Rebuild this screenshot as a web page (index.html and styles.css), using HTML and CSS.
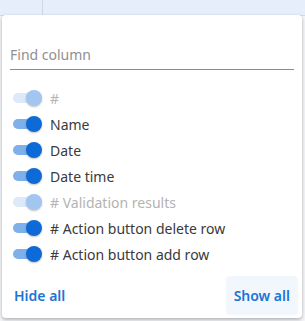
FILE: index.html
```html
<!DOCTYPE html>
<html lang="en">
<head>
    <meta charset="UTF-8">
    <meta name="viewport" content="width=device-width, initial-scale=1.0">
    <title>Columns panel</title>
    <link rel="stylesheet" href="styles.css">
</head>
<body>
    <div class="grid-header">
        <div class="header-cell first"></div>
        <div class="header-cell"></div>
    </div>

    <div class="panel">
        <div class="search">
            <input type="text" class="search-input" placeholder="Find column">
        </div>

        <ul class="column-list">
            <li class="column-item disabled"><span class="switch on"><span class="track"></span><span class="thumb"></span></span>#</li>
            <li class="column-item"><span class="switch on"><span class="track"></span><span class="thumb"></span></span>Name</li>
            <li class="column-item"><span class="switch on"><span class="track"></span><span class="thumb"></span></span>Date</li>
            <li class="column-item"><span class="switch on"><span class="track"></span><span class="thumb"></span></span>Date time</li>
            <li class="column-item disabled"><span class="switch on"><span class="track"></span><span class="thumb"></span></span># Validation results</li>
            <li class="column-item"><span class="switch on"><span class="track"></span><span class="thumb"></span></span># Action button delete row</li>
            <li class="column-item"><span class="switch on"><span class="track"></span><span class="thumb"></span></span># Action button add row</li>
        </ul>

        <div class="panel-footer">
            <button class="text-button">Hide all</button>
            <button class="text-button active">Show all</button>
        </div>
    </div>
</body>
</html>
```

FILE: styles.css
```css
body {
    margin: 0;
    width: 305px;
    height: 321px;
    overflow: hidden;
    background-color: #f4f6fa;
    font-family: "Noto Sans", "Open Sans", Arial, sans-serif;
    position: relative;
}
.grid-header {
    display: flex;
    height: 15px;
    background-color: #e7eefb;
    border-bottom: 1px solid #d4dae4;
}
.header-cell.first {
    width: 42px;
    border-right: 1px solid #d0d7e3;
}
.panel {
    position: absolute;
    top: 15px;
    left: 2px;
    width: 300px;
    height: 303px;
    box-sizing: border-box;
    background-color: #fff;
    border-radius: 4px;
    box-shadow: 0 2px 4px rgba(0, 0, 0, 0.2), 0 1px 3px rgba(0, 0, 0, 0.12);
    display: flex;
    flex-direction: column;
}
.search {
    padding: 30px 8px 0 8px;
}
.search-input {
    display: block;
    width: 100%;
    box-sizing: border-box;
    border: none;
    border-bottom: 1px solid #8c8c8c;
    padding: 0 0 5px 0;
    font-family: inherit;
    font-size: 14px;
    color: #333;
    outline: none;
}
.search-input::placeholder {
    color: #8f8f8f;
}
.column-list {
    list-style: none;
    margin: 0;
    padding: 15px 0 0 11px;
}
.column-item {
    display: flex;
    align-items: center;
    height: 26px;
    font-size: 14px;
    color: #3a3a3a;
}
.column-item.disabled {
    color: #b3b3b3;
}
.switch {
    position: relative;
    width: 29px;
    height: 16px;
    margin-right: 8px;
}
.track {
    position: absolute;
    left: 0;
    top: 3px;
    width: 26px;
    height: 10px;
    border-radius: 5px;
    background-color: #7eb0ec;
}
.thumb {
    position: absolute;
    left: 13px;
    top: 0;
    width: 16px;
    height: 16px;
    border-radius: 50%;
    background-color: #0d6ad6;
    box-shadow: 0 1px 2px rgba(0, 0, 0, 0.25);
}
.disabled .track {
    background-color: #dde9f9;
}
.disabled .thumb {
    background-color: #a3c6f1;
}
.panel-footer {
    margin-top: auto;
    display: flex;
    justify-content: space-between;
    align-items: center;
    padding: 0 4px 3px 4px;
}
.text-button {
    border: none;
    background: none;
    font-family: inherit;
    font-size: 14px;
    font-weight: 600;
    color: #1b74d6;
    padding: 10px 8px;
    border-radius: 4px;
    cursor: pointer;
}
.text-button.active {
    background-color: #f2f7fd;
}
```
